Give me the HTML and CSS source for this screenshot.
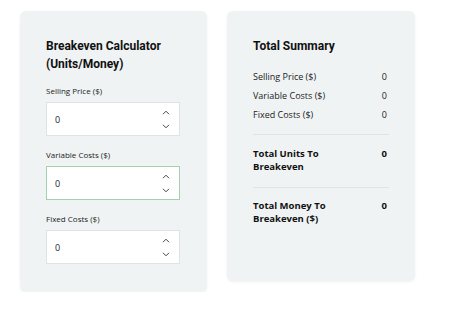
FILE: index.html
```html
<!DOCTYPE html>
<html lang="en">
<head>
    <meta charset="UTF-8">
    <meta name="viewport" content="width=device-width, initial-scale=1.0">
    <title>Breakeven Calculator</title>
    <link rel="stylesheet" href="styles.css">
</head>
<body>
    <div class="wrapper">
        <div class="card calc">
            <h1>Breakeven Calculator (Units/Money)</h1>

            <div class="field">
                <label for="price">Selling Price ($)</label>
                <div class="number-box">
                    <input type="text" id="price" value="0">
                    <span class="spin">
                        <svg viewBox="0 0 8 5"><path d="M1 4.2 4 1.2 7 4.2"/></svg>
                        <svg viewBox="0 0 8 5"><path d="M1 0.8 4 3.8 7 0.8"/></svg>
                    </span>
                </div>
            </div>

            <div class="field">
                <label for="variable">Variable Costs ($)</label>
                <div class="number-box focused">
                    <input type="text" id="variable" value="0">
                    <span class="spin">
                        <svg viewBox="0 0 8 5"><path d="M1 4.2 4 1.2 7 4.2"/></svg>
                        <svg viewBox="0 0 8 5"><path d="M1 0.8 4 3.8 7 0.8"/></svg>
                    </span>
                </div>
            </div>

            <div class="field">
                <label for="fixed">Fixed Costs ($)</label>
                <div class="number-box">
                    <input type="text" id="fixed" value="0">
                    <span class="spin">
                        <svg viewBox="0 0 8 5"><path d="M1 4.2 4 1.2 7 4.2"/></svg>
                        <svg viewBox="0 0 8 5"><path d="M1 0.8 4 3.8 7 0.8"/></svg>
                    </span>
                </div>
            </div>
        </div>

        <div class="card summary">
            <h2>Total Summary</h2>
            <div class="rows">
                <div class="row"><span>Selling Price ($)</span><span>0</span></div>
                <div class="row"><span>Variable Costs ($)</span><span>0</span></div>
                <div class="row"><span>Fixed Costs ($)</span><span>0</span></div>
            </div>
            <div class="total">
                <span class="total-label">Total Units To Breakeven</span>
                <span>0</span>
            </div>
            <div class="total">
                <span class="total-label">Total Money To Breakeven ($)</span>
                <span>0</span>
            </div>
        </div>
    </div>
</body>
</html>
```

FILE: styles.css
```css
* {
    margin: 0;
    padding: 0;
    box-sizing: border-box;
}

body {
    font-family: 'Open Sans', 'Noto Sans', sans-serif;
    background-color: #fff;
    color: #222;
}

.wrapper {
    display: flex;
    align-items: flex-start;
    gap: 20px;
    padding: 11px 0 0 20px;
}

.card {
    background: #f0f3f4;
    border-radius: 6px;
    box-shadow: 0 1px 3px rgba(0, 0, 0, 0.06);
    padding: 26px 26px 28px;
}

.calc {
    width: 187px;
}

.summary {
    width: 188px;
    padding-bottom: 56px;
}

h1, h2 {
    font-family: Roboto, 'Liberation Sans', sans-serif;
    font-weight: 700;
    font-size: 12px;
    line-height: 18px;
    color: #111;
}

h1 {
    margin-bottom: 12px;
}

h2 {
    margin-bottom: 12px;
}

.field {
    margin-bottom: 13px;
}

.field:last-child {
    margin-bottom: 0;
}

label {
    display: block;
    font-size: 8px;
    line-height: 12px;
    margin-bottom: 5px;
    color: #222;
}

.number-box {
    display: flex;
    align-items: center;
    width: 134px;
    height: 34px;
    background: #fff;
    border: 1px solid #dfe3e4;
}

.number-box.focused {
    border-color: #a3d2ad;
}

.number-box input {
    flex: 1;
    min-width: 0;
    border: none;
    outline: none;
    background: transparent;
    padding-left: 8px;
    font-family: 'Open Sans', sans-serif;
    font-size: 9px;
    color: #222;
}

.spin {
    display: flex;
    flex-direction: column;
    gap: 9px;
    margin-right: 9px;
}

.spin svg {
    display: block;
    width: 8px;
    height: 5px;
    fill: none;
    stroke: #444;
    stroke-width: 1;
}

.rows {
    padding-bottom: 10px;
    border-bottom: 1px solid #e0e4e6;
}

.row {
    display: flex;
    justify-content: space-between;
    font-size: 9px;
    line-height: 19px;
    padding-right: 2px;
}

.total {
    display: flex;
    justify-content: space-between;
    font-size: 9.5px;
    font-weight: 700;
    line-height: 13px;
    padding: 12px 2px 14px 0;
    color: #111;
}

.total + .total {
    border-top: 1px solid #e0e4e6;
    padding-top: 11px;
    padding-bottom: 0;
}

.total-label {
    width: 80px;
}
```
